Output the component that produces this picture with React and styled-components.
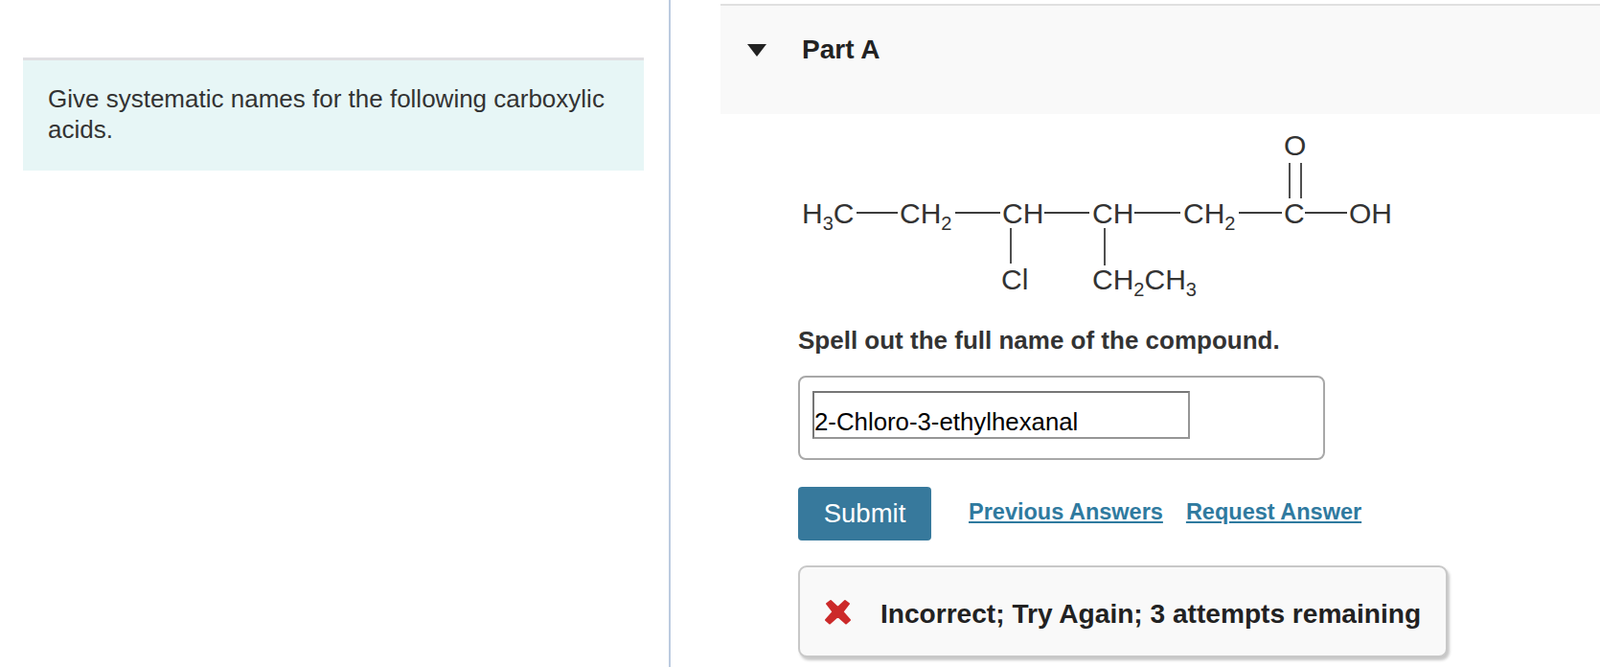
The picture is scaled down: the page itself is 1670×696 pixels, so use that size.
import React from "react";
import styled, { createGlobalStyle } from "styled-components";

const GlobalStyle = createGlobalStyle`
  html, body {
    margin: 0;
    padding: 0;
    background: #fff;
    overflow: hidden;
  }
  body {
    font-family: "Liberation Sans", Arial, sans-serif;
    color: #333;
  }
`;

const Page = styled.div`
  display: flex;
  width: 1670px;
  height: 696px;
  overflow: hidden;
`;

const LeftColumn = styled.div`
  box-sizing: border-box;
  width: 700px;
  flex-shrink: 0;
  padding: 60px 26px 0 24px;
  border-right: 2px solid #bccbe0;
`;

const Intro = styled.div`
  box-sizing: border-box;
  height: 118px;
  padding: 24px 26px 0;
  background: #e7f6f6;
  border-top: 3px solid #e0dfe2;
  font-size: 26px;
  line-height: 32px;
  color: #333;
`;

const RightColumn = styled.div`
  flex: 1;
  padding-left: 52px;
  padding-top: 4px;
`;

const PartHeader = styled.div`
  box-sizing: border-box;
  display: flex;
  align-items: flex-start;
  height: 115px;
  padding: 29px 0 0 28px;
  background: #f9f9f9;
  border-top: 2px solid #e0e0e0;
`;

const Caret = styled.div`
  width: 0;
  height: 0;
  margin-top: 11px;
  border-left: 10px solid transparent;
  border-right: 10px solid transparent;
  border-top: 13px solid #222;
`;

const PartTitle = styled.h2`
  margin: 0 0 0 37px;
  font-size: 28px;
  line-height: 34px;
  font-weight: 700;
  color: #222;
`;

const PartBody = styled.div`
  padding-left: 81px;
`;

const Molecule = styled.svg`
  display: block;
  margin: 11px 0 0 -3px;
  font-family: "Liberation Sans", Arial, sans-serif;
  fill: #333;
  stroke: none;
  line {
    stroke: #3c3c3c;
    stroke-width: 1.8;
  }
`;

const Prompt = styled.p`
  margin: 18px 0 0;
  font-size: 26px;
  line-height: 34px;
  font-weight: 700;
  color: #333;
`;

const AnswerBox = styled.div`
  box-sizing: border-box;
  width: 550px;
  height: 88px;
  margin-top: 20px;
  padding: 14px 13px;
  background: #fff;
  border: 2px solid #a8a8a8;
  border-radius: 8px;
`;

const AnswerInput = styled.input`
  box-sizing: border-box;
  display: block;
  width: 394px;
  height: 50px;
  padding: 15px 0 0 0;
  border: 2px solid;
  border-color: #767676 #969696 #969696 #767676;
  border-radius: 0;
  outline: none;
  font-family: "Liberation Sans", Arial, sans-serif;
  font-size: 25.8px;
  color: #000;
  background: #fff;
`;

const ActionRow = styled.div`
  display: flex;
  align-items: flex-start;
  margin-top: 28px;
`;

const SubmitButton = styled.button`
  box-sizing: border-box;
  width: 139px;
  height: 56px;
  border: 0;
  border-radius: 4px;
  background: #37799c;
  color: #fff;
  font-family: "Liberation Sans", Arial, sans-serif;
  font-size: 27.5px;
`;

const ActionLink = styled.a`
  margin: 11px 0 0 ${(p) => p.$gap}px;
  font-size: 23.5px;
  line-height: 30px;
  font-weight: 700;
  color: #2f7a9f;
  text-decoration: underline;
  cursor: pointer;
`;

const Feedback = styled.div`
  box-sizing: border-box;
  display: flex;
  align-items: center;
  width: 678px;
  height: 96px;
  margin-top: 26px;
  padding-left: 25px;
  background: #f9f9f9;
  border: 2px solid #c8c8c8;
  border-radius: 9px;
  box-shadow: 2px 3px 3px rgba(0, 0, 0, 0.22);
`;

const FeedbackText = styled.span`
  margin: 6px 0 0 30px;
  font-size: 28.1px;
  font-weight: 700;
  color: #222;
`;

const CrossIcon = () => (
  <svg width="29" height="27" viewBox="0 0 29 27">
    <path
      d="M3 5 L7 2 L14.5 9 L22 2 L26 5 L19.5 13.5 L27 22 L23 25.5 L14.5 18 L6 25.5 L2 22 L9.5 13.5 Z"
      fill="#cc2a2a"
      stroke="#cc2a2a"
      strokeWidth="2"
      strokeLinejoin="round"
    />
  </svg>
);

const StructureDrawing = () => (
  <Molecule width="640" height="190" viewBox="830 130 640 190" fontSize="30">
    <text x="1340" y="162">O</text>
    <line x1="1346" y1="170" x2="1346" y2="207" />
    <line x1="1358" y1="170" x2="1358" y2="207" />

    <text x="837" y="233">H<tspan dy="7" fontSize="20">3</tspan><tspan dy="-7">C</tspan></text>
    <line x1="894" y1="222" x2="937" y2="222" />
    <text x="939" y="233">CH<tspan dy="7" fontSize="20">2</tspan></text>
    <line x1="997" y1="222" x2="1044" y2="222" />
    <text x="1046" y="233">CH</text>
    <line x1="1090" y1="222" x2="1137" y2="222" />
    <text x="1140" y="233">CH</text>
    <line x1="1184" y1="222" x2="1232" y2="222" />
    <text x="1235" y="233">CH<tspan dy="7" fontSize="20">2</tspan></text>
    <line x1="1293" y1="222" x2="1338" y2="222" />
    <text x="1340" y="233">C</text>
    <line x1="1362" y1="222" x2="1406" y2="222" />
    <text x="1408" y="233">OH</text>

    <line x1="1055" y1="238" x2="1055" y2="275" />
    <line x1="1153" y1="238" x2="1153" y2="277" />
    <text x="1045" y="302">Cl</text>
    <text x="1140" y="302">CH<tspan dy="7" fontSize="20">2</tspan><tspan dy="-7">CH</tspan><tspan dy="7" fontSize="20">3</tspan></text>
  </Molecule>
);

export default function App() {
  return (
    <Page>
      <GlobalStyle />
      <LeftColumn>
        <Intro>Give systematic names for the following carboxylic acids.</Intro>
      </LeftColumn>
      <RightColumn>
        <PartHeader>
          <Caret />
          <PartTitle>Part A</PartTitle>
        </PartHeader>
        <PartBody>
          <StructureDrawing />
          <Prompt>Spell out the full name of the compound.</Prompt>
          <AnswerBox>
            <AnswerInput readOnly value="2-Chloro-3-ethylhexanal" />
          </AnswerBox>
          <ActionRow>
            <SubmitButton>Submit</SubmitButton>
            <ActionLink $gap={39}>Previous Answers</ActionLink>
            <ActionLink $gap={24}>Request Answer</ActionLink>
          </ActionRow>
          <Feedback>
            <CrossIcon />
            <FeedbackText>Incorrect; Try Again; 3 attempts remaining</FeedbackText>
          </Feedback>
        </PartBody>
      </RightColumn>
    </Page>
  );
}
